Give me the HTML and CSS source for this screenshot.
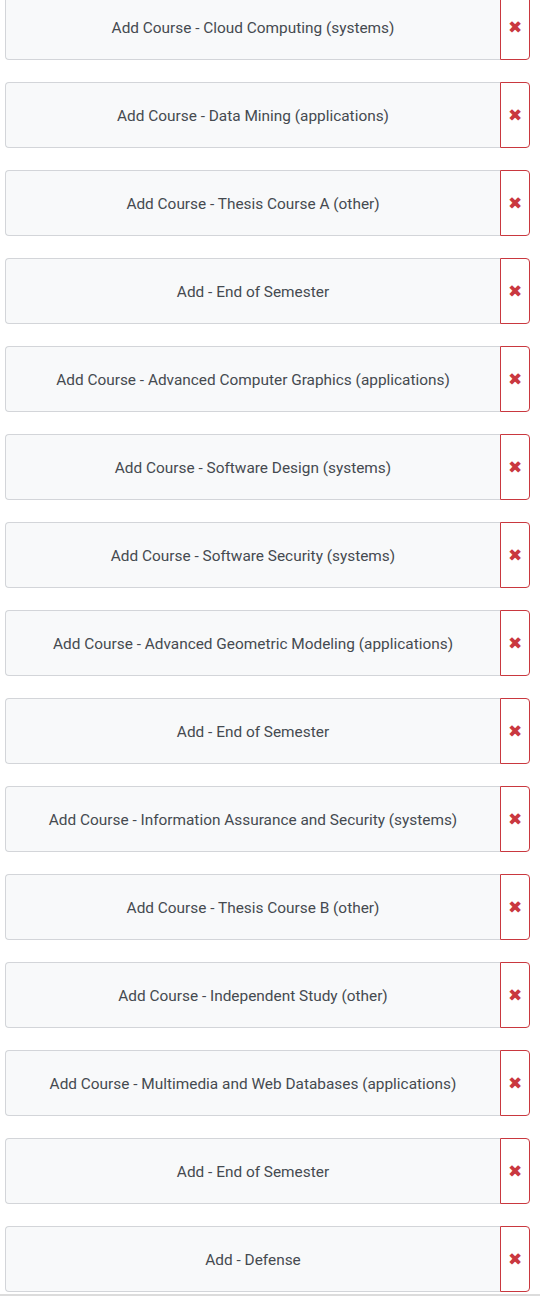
FILE: index.html
```html
<!DOCTYPE html>
<html lang="en">
<head>
  <meta charset="UTF-8" />
  <title>Plan of Study</title>
  <meta name="viewport" content="width=device-width, initial-scale=1.0"/>
  <link rel="stylesheet" href="styles.css">
</head>
<body>

  <div class="plan-list">
    <div class="plan-row">
      <button class="plan-item">Add Course - Cloud Computing (systems)</button>
      <button class="plan-remove" title="Remove">&#x2716;</button>
    </div>
    <div class="plan-row">
      <button class="plan-item">Add Course - Data Mining (applications)</button>
      <button class="plan-remove" title="Remove">&#x2716;</button>
    </div>
    <div class="plan-row">
      <button class="plan-item">Add Course - Thesis Course A (other)</button>
      <button class="plan-remove" title="Remove">&#x2716;</button>
    </div>
    <div class="plan-row">
      <button class="plan-item">Add - End of Semester</button>
      <button class="plan-remove" title="Remove">&#x2716;</button>
    </div>
    <div class="plan-row">
      <button class="plan-item">Add Course - Advanced Computer Graphics (applications)</button>
      <button class="plan-remove" title="Remove">&#x2716;</button>
    </div>
    <div class="plan-row">
      <button class="plan-item">Add Course - Software Design (systems)</button>
      <button class="plan-remove" title="Remove">&#x2716;</button>
    </div>
    <div class="plan-row">
      <button class="plan-item">Add Course - Software Security (systems)</button>
      <button class="plan-remove" title="Remove">&#x2716;</button>
    </div>
    <div class="plan-row">
      <button class="plan-item">Add Course - Advanced Geometric Modeling (applications)</button>
      <button class="plan-remove" title="Remove">&#x2716;</button>
    </div>
    <div class="plan-row">
      <button class="plan-item">Add - End of Semester</button>
      <button class="plan-remove" title="Remove">&#x2716;</button>
    </div>
    <div class="plan-row">
      <button class="plan-item">Add Course - Information Assurance and Security (systems)</button>
      <button class="plan-remove" title="Remove">&#x2716;</button>
    </div>
    <div class="plan-row">
      <button class="plan-item">Add Course - Thesis Course B (other)</button>
      <button class="plan-remove" title="Remove">&#x2716;</button>
    </div>
    <div class="plan-row">
      <button class="plan-item">Add Course - Independent Study (other)</button>
      <button class="plan-remove" title="Remove">&#x2716;</button>
    </div>
    <div class="plan-row">
      <button class="plan-item">Add Course - Multimedia and Web Databases (applications)</button>
      <button class="plan-remove" title="Remove">&#x2716;</button>
    </div>
    <div class="plan-row">
      <button class="plan-item">Add - End of Semester</button>
      <button class="plan-remove" title="Remove">&#x2716;</button>
    </div>
    <div class="plan-row">
      <button class="plan-item">Add - Defense</button>
      <button class="plan-remove" title="Remove">&#x2716;</button>
    </div>
  </div>

  <div class="page-end"></div>

</body>
</html>
```

FILE: styles.css
```css
body {
  font-family: Roboto, 'Liberation Sans', sans-serif;
  background: #ffffff;
  margin: 0;
  padding: 0;
  overflow: hidden;
}

/* Lista del plan (desplazada, la primera fila queda cortada arriba) */
.plan-list {
  margin-top: -6px;
  padding-left: 5px;
  width: 525px;
  display: flex;
  flex-direction: column;
  gap: 22px;
}

.plan-row {
  display: flex;
  height: 66px;
}

.plan-item {
  flex: 1;
  background-color: #f8f9fa;
  border: 1px solid #d3d5d9;
  border-right: none;
  border-radius: 4px 0 0 4px;
  color: #454a50;
  font-family: Roboto, 'Liberation Sans', sans-serif;
  font-size: 15.4px;
  padding: 2px 8px 0;
  cursor: pointer;
}

.plan-remove {
  width: 30px;
  background-color: #ffffff;
  border: 1px solid #c9383f;
  border-radius: 0 4px 4px 0;
  color: #c9383f;
  font-family: 'DejaVu Sans', sans-serif;
  font-size: 17px;
  line-height: 1;
  padding: 0;
  cursor: pointer;
}

.plan-remove:hover {
  background-color: #c9383f;
  color: white;
}

.page-end {
  margin-top: 2px;
  width: 540px;
  height: 2px;
  background-color: #dcdcdc;
}
```
